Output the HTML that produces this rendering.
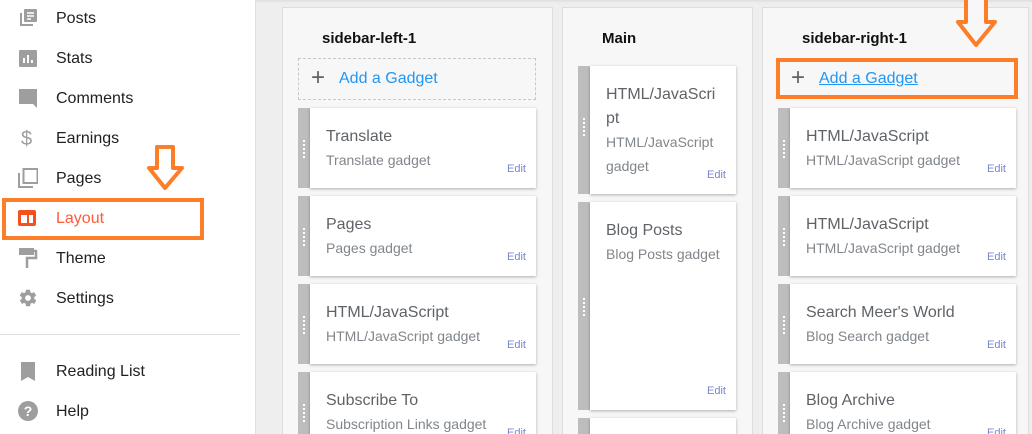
<!DOCTYPE html>
<html><head><meta charset="utf-8">
<style>
*{margin:0;padding:0;box-sizing:border-box}
html,body{width:1032px;height:434px;overflow:hidden}
body{background:#eeeeee;font-family:"Liberation Sans",Roboto,sans-serif}
#wrap{position:relative;width:1032px;height:434px;overflow:hidden}
.abs{position:absolute}
#side{left:0;top:0;width:256px;height:434px;background:#fff;border-right:1px solid #e0e0e0}
.nav{position:absolute;left:56px;font-size:16px;color:#212121}
.ic{position:absolute;left:18px;width:20px;height:20px}
.col{position:absolute;top:7px;height:427px;background:#f7f7f7;border:1px solid #ddd;border-bottom:none}
.h{position:absolute;font-weight:bold;font-size:15px;color:#111}
.bar{position:absolute;width:12px;background:#bdbdbd;overflow:hidden}
.bar i{position:absolute;left:5px;width:2px;height:2px;background:#fff}
.card{position:absolute;background:#fff;box-shadow:0 1px 3px rgba(0,0,0,.3);overflow:hidden}
.t{position:absolute;left:16px;top:17px;font-size:16px;color:#5f6368;line-height:24px}
.s{position:absolute;left:16px;font-size:14px;color:#80868b;line-height:24px}
.e{position:absolute;right:10px;font-size:11px;color:#7986cb}
.add{position:absolute;font-size:16px;color:#2196f3}
</style></head><body><div id="wrap">
<div class="abs" style="left:0;top:0;width:1032px;height:3px;background:linear-gradient(#ddd,#eee)"></div>
<div id="side" class="abs">
<svg class="ic" style="top:8px" viewBox="0 0 20 20"><path d="M2 5v13h13v-2H4V5z" fill="#9e9e9e"/><rect x="6" y="1" width="13" height="13" rx="1" fill="#9e9e9e"/><path d="M9 5h7M9 8h7M9 11h4" stroke="#fff" stroke-width="1.5"/></svg>
<div class="nav" style="top:10px">Posts</div>
<svg class="ic" style="top:48px" viewBox="0 0 20 20"><rect x="1" y="2" width="18" height="17" rx="1" fill="#9e9e9e"/><path d="M6 15v-5M10 15V7M14 15v-3" stroke="#fff" stroke-width="2"/></svg>
<div class="nav" style="top:50px">Stats</div>
<svg class="ic" style="top:88px" viewBox="0 0 20 20"><path d="M1 1h18v15l3 3-3-3H1z" fill="#9e9e9e"/><path d="M15 16l4 4v-4z" fill="#9e9e9e"/></svg>
<div class="nav" style="top:90px">Comments</div>
<div class="abs" style="left:21px;top:128px;font-size:20px;color:#9e9e9e">$</div>
<div class="nav" style="top:130px">Earnings</div>
<svg class="ic" style="top:168px" viewBox="0 0 20 20"><path d="M1 5v14h14" stroke="#9e9e9e" stroke-width="2" fill="none"/><rect x="5.5" y="1" width="14" height="14" stroke="#9e9e9e" stroke-width="2" fill="none"/></svg>
<div class="nav" style="top:170px">Pages</div>
<div class="abs" style="left:2px;top:198px;width:202px;height:42px;border:4px solid #fd7e28"></div>
<svg class="ic" style="top:210px;width:18px;height:16px" viewBox="0 0 18 16"><rect x="0" y="0" width="18" height="16" rx="2" fill="#f4511e"/><rect x="3" y="5" width="6" height="8" fill="#fff"/><rect x="11" y="5" width="4" height="8" fill="#fff"/></svg>
<div class="nav" style="top:210px;color:#ff5a3c">Layout</div>
<svg class="ic" style="top:248px" viewBox="0 0 20 20"><rect x="1" y="0" width="15" height="7" fill="#9e9e9e"/><path d="M16 3h2v7H9v10" stroke="#9e9e9e" stroke-width="2.5" fill="none"/></svg>
<div class="nav" style="top:250px">Theme</div>
<svg class="ic" style="top:288px" viewBox="0 0 24 24"><path fill="#9e9e9e" d="M19.4 13c.04-.3.1-.6.1-1s-.03-.7-.1-1l2.1-1.6c.2-.15.2-.4.1-.6l-2-3.5c-.1-.2-.4-.3-.6-.2l-2.5 1c-.5-.4-1.1-.7-1.7-1l-.4-2.6c0-.2-.2-.4-.5-.4h-4c-.25 0-.45.2-.5.4l-.4 2.6c-.6.3-1.2.6-1.7 1l-2.5-1c-.2-.1-.5 0-.6.2l-2 3.5c-.1.2-.1.5.1.6L4.6 11c0 .3-.1.7-.1 1s0 .7.1 1l-2.1 1.6c-.2.15-.2.4-.1.6l2 3.5c.1.2.4.3.6.2l2.5-1c.5.4 1.1.7 1.7 1l.4 2.6c0 .2.2.4.5.4h4c.25 0 .45-.2.5-.4l.4-2.6c.6-.3 1.2-.6 1.7-1l2.5 1c.2.1.5 0 .6-.2l2-3.5c.1-.2.1-.5-.1-.6zM12 15.5a3.5 3.5 0 110-7 3.5 3.5 0 010 7z"/></svg>
<div class="nav" style="top:290px">Settings</div>
<div class="abs" style="left:0;top:334px;width:240px;height:1px;background:#e0e0e0"></div>
<svg class="ic" style="top:361px" viewBox="0 0 20 20"><path d="M3 1h14v19l-7-4-7 4z" fill="#9e9e9e"/></svg>
<div class="nav" style="top:363px">Reading List</div>
<svg class="ic" style="top:401px" viewBox="0 0 20 20"><circle cx="10" cy="10" r="10" fill="#9e9e9e"/><text x="10" y="15" font-size="14" font-weight="bold" text-anchor="middle" fill="#fff" font-family="Liberation Sans">?</text></svg>
<div class="nav" style="top:403px">Help</div>
<svg class="abs" style="left:146px;top:144px" width="40" height="48" viewBox="0 0 40 48"><path d="M11 3h16v21h9L19 44 3 24h8z" fill="#fff" stroke="#fd7e28" stroke-width="4" stroke-linejoin="round"/></svg>
</div>

<div class="col" style="left:282px;width:271px"></div>
<div class="h" style="left:322px;top:30px">sidebar-left-1</div>
<div class="abs" style="left:298px;top:58px;width:238px;height:42px;border:1px dashed #c8c8c8"></div>
<div class="abs" style="left:311px;top:64px;font-size:24px;color:#616161;font-weight:300">+</div>
<div class="add" style="left:339px;top:70px">Add a Gadget</div>

<div class="col" style="left:562px;width:191px"></div>
<div class="h" style="left:602px;top:30px">Main</div>

<div class="col" style="left:762px;width:267px"></div>
<div class="h" style="left:802px;top:30px">sidebar-right-1</div>
<div class="abs" style="left:776px;top:58px;width:242px;height:41px;border:4px solid #fd7e28;background:#f7f7f7"></div>
<div class="abs" style="left:791px;top:64px;font-size:24px;color:#616161;font-weight:300">+</div>
<div class="add" style="left:819px;top:70px;text-decoration:underline">Add a Gadget</div>
<svg class="abs" style="left:953px;top:0px" width="48" height="48" viewBox="0 4 48 48"><path d="M13 2h20v24h9L23 49 5 26h8z" fill="#f7f7f7" stroke="#fd7e28" stroke-width="4" stroke-linejoin="round"/></svg>

<div id="cards"></div>
</div>
<script>
var C=[
[298,108,80,238,"Translate","Translate gadget"],
[298,196,80,238,"Pages","Pages gadget"],
[298,284,80,238,"HTML/JavaScript","HTML/JavaScript gadget"],
[298,372,80,238,"Subscribe To","Subscription Links gadget"],
[578,66,128,158,"HTML/JavaScri<br>pt","HTML/JavaScript<br>gadget"],
[578,202,208,158,"Blog Posts","Blog Posts gadget"],
[578,418,40,158,"",""],
[778,108,80,238,"HTML/JavaScript","HTML/JavaScript gadget"],
[778,196,80,238,"HTML/JavaScript","HTML/JavaScript gadget"],
[778,284,80,238,"Search Meer's World","Blog Search gadget"],
[778,372,80,238,"Blog Archive","Blog Archive gadget"]];
var h="";
C.forEach(function(c){
var x=c[0],y=c[1],hh=c[2],w=c[3];
var vh=Math.min(hh,434-y);
var dots="";var mid=hh/2-8;if(hh>100&&hh<150)mid=52;if(hh>150)mid=96;if(hh<60)mid=16;
for(var i=0;i<5;i++)dots+='<i style="top:'+(mid+i*4)+'px"></i>';
h+='<div class="bar" style="left:'+x+'px;top:'+y+'px;height:'+vh+'px">'+dots+'</div>';
var sTop=c[4].indexOf("<br>")>0?64:40;
h+='<div class="card" style="left:'+(x+12)+'px;top:'+y+'px;width:'+(w-12)+'px;height:'+vh+'px">';
if(c[4]){h+='<div class="t">'+c[4]+'</div><div class="s" style="top:'+sTop+'px">'+c[5]+'</div><div class="e" style="top:'+(hh-25)+'px">Edit</div>';}
h+='</div>';});
document.getElementById("cards").innerHTML=h;
</script>
</body></html>
